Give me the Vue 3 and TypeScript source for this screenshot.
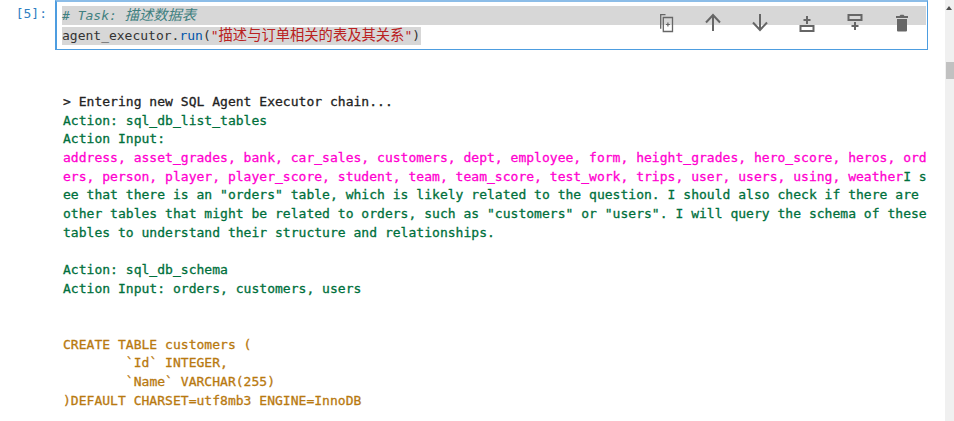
<script setup lang="ts">
const icons = [
  { id: 'copy', w: 14 },
  { id: 'up', w: 16 },
  { id: 'down', w: 16 },
  { id: 'above', w: 16 },
  { id: 'below', w: 16 },
  { id: 'trash', w: 12 },
]
</script>

<template>
  <div class="page">
    <main class="notebook">
      <section class="input-row">
        <div class="prompt">[5]:</div>
        <div class="cell">
          <div class="code">
            <div class="line full"><span class="comment"># Task: <span class="cjk">描述数据表</span></span></div>
            <div class="line"><span class="sel">agent_executor.<span class="fn">run</span>(<span class="str">"<span class="cjk">描述与订单相关的表及其关系</span>"</span>)</span></div>
          </div>
          <div class="toolbar">
            <svg v-for="i in icons" :key="i.id" class="icon" width="24" height="24" viewBox="0 0 24 24">
              <g v-if="i.id === 'copy'" fill="none" stroke="#666" stroke-width="1.300">
                <path d="M11.500 4.700H6.700v14" />
                <path d="M9.300 7.500h9.200v14H9.300z" />
                <path d="M13.900 12.500v4M11.900 14.500h4" stroke-width="1.200" />
              </g>
              <path v-else-if="i.id === 'up'" d="M12 21V5.500M5 12.500 12 5l7 7.500" fill="none" stroke="#666" stroke-width="2" />
              <path v-else-if="i.id === 'down'" d="M12 4v15.500M5 12.500 12 20l7-7.500" fill="none" stroke="#666" stroke-width="2" />
              <g v-else-if="i.id === 'above'" fill="none" stroke="#666" stroke-width="2">
                <path d="M12 6v8M8.500 10h7" />
                <rect x="5.500" y="16" width="13" height="5" />
              </g>
              <g v-else-if="i.id === 'below'" fill="none" stroke="#666" stroke-width="2">
                <rect x="5.500" y="5" width="13" height="5" />
                <path d="M12 12v8M8.500 16h7" />
              </g>
              <path v-else d="M7 9h10v11.500a1 1 0 0 1-1 1H8a1 1 0 0 1-1-1zM6 6h3.500l1-1.200h3l1 1.200H18v2H6z" fill="#666" />
            </svg>
          </div>
        </div>
      </section>
      <pre class="output"><span class="plain">&gt; Entering new SQL Agent Executor chain...</span>
<span class="green">Action: sql_db_list_tables
Action Input: </span>
<span class="pink">address, asset_grades, bank, car_sales, customers, dept, employee, form, height_grades, hero_score, heros, ord
ers, person, player, player_score, student, team, team_score, test_work, trips, user, users, using, weather</span><span class="green">I s
ee that there is an "orders" table, which is likely related to the question. I should also check if there are 
other tables that might be related to orders, such as "customers" or "users". I will query the schema of these
tables to understand their structure and relationships.

Action: sql_db_schema
Action Input: orders, customers, users</span>


<span class="amber">CREATE TABLE customers (
	`Id` INTEGER, 
	`Name` VARCHAR(255)
)DEFAULT CHARSET=utf8mb3 ENGINE=InnoDB</span></pre>
    </main>
    <aside class="scrollbar">
      <span class="arrow"></span>
      <span class="thumb"></span>
    </aside>
  </div>
</template>

<style scoped>
.page {
  width: 954px;
  height: 421px;
  display: flex;
  overflow: hidden;
  background: #fff;
  font-family: "DejaVu Sans Mono", "Noto Sans CJK SC", monospace;
}
.notebook {
  flex: 1;
  min-width: 0;
}
.input-row {
  display: flex;
  width: 928px;
}
.prompt {
  width: 55px;
  padding: 4px 8px 0 0;
  box-sizing: border-box;
  text-align: right;
  color: #307fc1;
  font-size: 13px;
  line-height: 19px;
}
.cell {
  position: relative;
  flex: 1;
  height: 50px;
  box-sizing: border-box;
  border: 1px solid #4d9de0;
  border-left-width: 2px;
  border-top: 2px solid #8cbde8;
  padding: 4px 1px 0 5px;
}
.code {
  font-size: 13px;
  line-height: 19px;
  color: #333;
}
.line {
  height: 20px;
  white-space: pre;
}
.cjk {
  font-size: 14.300px;
  line-height: 1;
}
.full {
  background: #d7d7d7;
  height: 19px;
  margin-bottom: 1px;
}
.sel {
  display: inline-block;
  background: #d7d7d7;
  height: 18px;
  width: 359px;
  line-height: 17px;
}
.comment {
  color: #408080;
  font-style: italic;
}
.fn {
  color: #0055aa;
}
.str {
  color: #ba2121;
}
.toolbar {
  position: absolute;
  top: 8px;
  right: 13px;
  display: flex;
  gap: 23.300px;
}
.icon {
  display: block;
}
.output {
  margin: 0;
  padding: 43px 0 0 63px;
  font-family: inherit;
  font-size: 13px;
  letter-spacing: 0.025px;
  line-height: 18.650px;
  tab-size: 8;
  color: #000;
  -webkit-text-stroke: 0.3px currentColor;
}
.plain {
  color: #222;
}
.green {
  color: #00703c;
}
.pink {
  color: #ff00d0;
}
.amber {
  color: #b8790f;
}
.scrollbar {
  position: relative;
  width: 9px;
  background: #f0f0f0;
}
.arrow {
  position: absolute;
  top: 6px;
  left: 1px;
  border: 3px solid transparent;
  border-top-width: 0;
  border-bottom: 4px solid #505050;
}
.thumb {
  position: absolute;
  top: 62px;
  left: 1px;
  width: 8px;
  height: 17px;
  background: #c1c1c1;
}
</style>
